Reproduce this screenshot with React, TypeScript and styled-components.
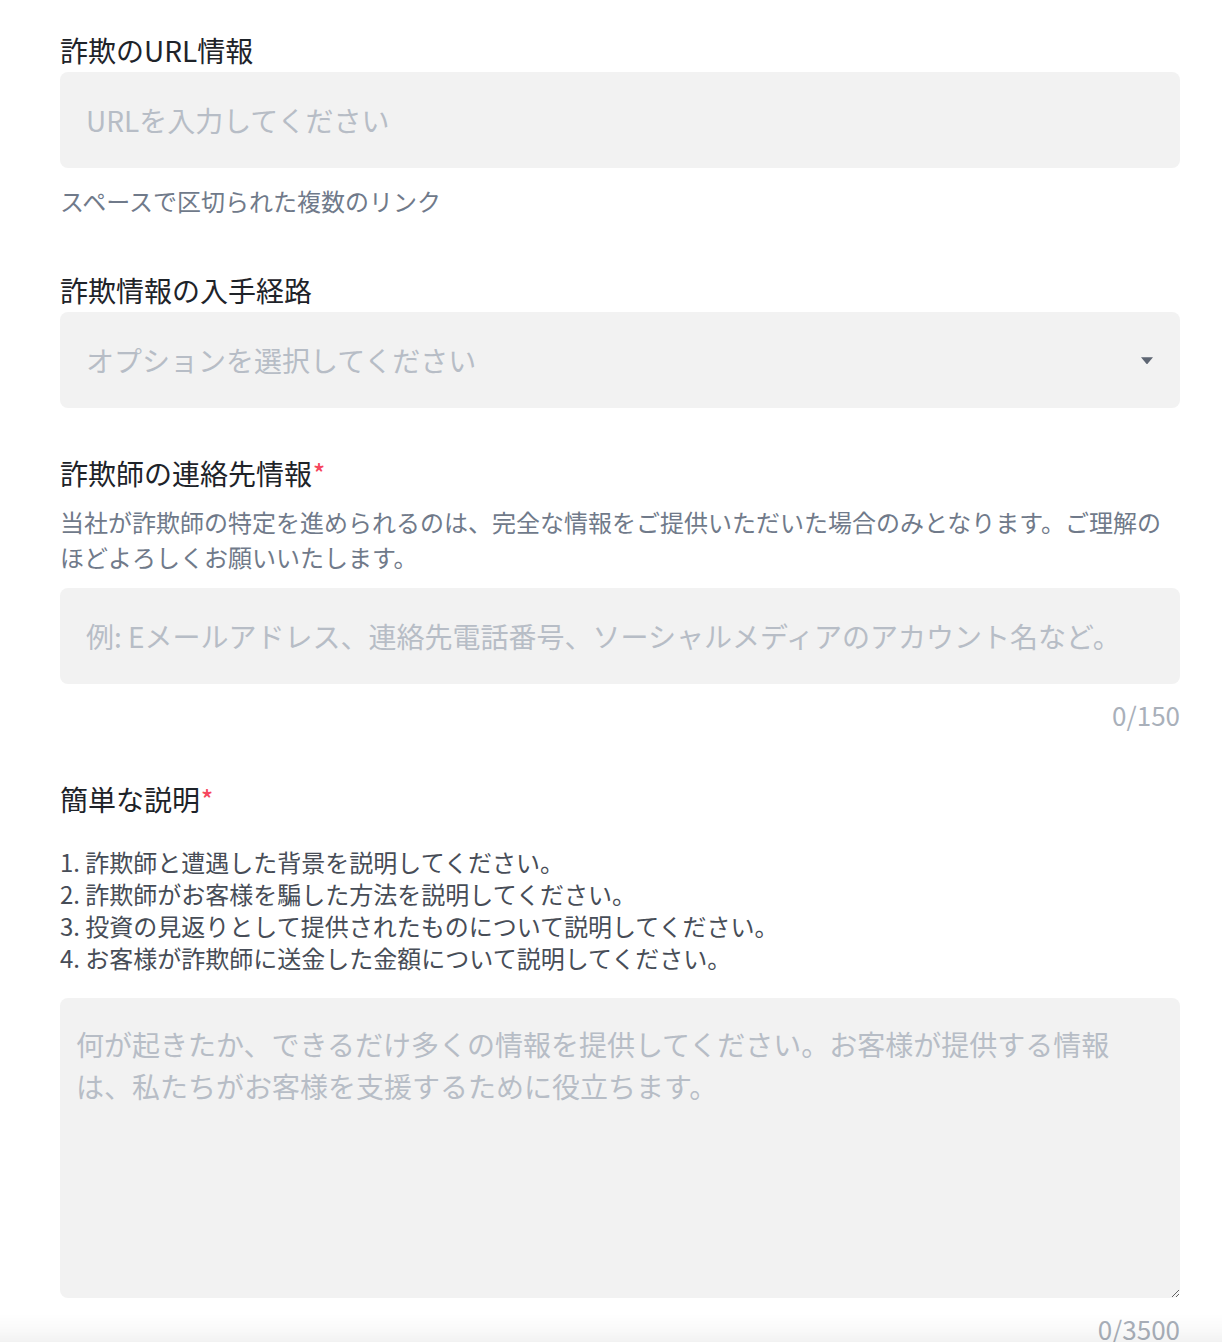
import React from "react";
import styled, { createGlobalStyle } from "styled-components";

const GlobalStyle = createGlobalStyle`
  html, body {
    margin: 0;
    padding: 0;
    background: #ffffff;
    overflow: hidden;
  }
  body {
    font-family: "Noto Sans CJK JP", "Noto Sans", sans-serif;
    color: #1e2329;
  }
  * { box-sizing: border-box; }
`;

const Form = styled.form`
  display: flex;
  flex-direction: column;
  padding: 30px 42px 0 60px;
  width: 1222px;
`;

const Field = styled.div<{ $gap?: number }>`
  display: flex;
  flex-direction: column;
  margin-bottom: ${(p) => p.$gap ?? 0}px;
`;

const Label = styled.label<{ $gap?: number }>`
  font-size: 28px;
  line-height: 40px;
  font-weight: 400;
  color: #1e2329;
  margin-bottom: ${(p) => p.$gap ?? 2}px;
`;

const Required = styled.span`
  color: #f6465d;
  font-size: 25px;
  font-weight: 500;
  line-height: 1;
  vertical-align: 2px;
  margin-left: 1px;
`;

const TextInput = styled.input`
  width: 100%;
  height: 96px;
  border: none;
  outline: none;
  border-radius: 8px;
  background: #f2f2f2;
  padding: 0 26px;
  font-family: inherit;
  font-size: 28px;
  color: #1e2329;
  &::placeholder {
    color: #b7bdc6;
  }
`;

const SelectBox = styled.div`
  display: flex;
  align-items: center;
  justify-content: space-between;
  height: 96px;
  border-radius: 8px;
  background: #f2f2f2;
  padding: 0 26px 0 26px;
  cursor: pointer;
`;

const SelectPlaceholder = styled.span`
  font-size: 28px;
  color: #b7bdc6;
`;

const Hint = styled.div<{ $top?: number }>`
  font-size: 24px;
  line-height: 36px;
  color: #707a8a;
  margin-top: ${(p) => p.$top ?? 0}px;
`;

const Para = styled.p`
  margin: 11px 0 14px;
  font-size: 24px;
  line-height: 35px;
  color: #707a8a;
`;

const Steps = styled.ol`
  list-style: none;
  margin: 27px 0 24px;
  padding: 0;
  font-size: 24px;
  line-height: 32px;
  color: #474d57;
`;

const Counter = styled.div`
  align-self: flex-end;
  font-size: 26px;
  line-height: 36px;
  color: #a9b0ba;
  margin-top: 13px;
`;

const TextArea = styled.textarea`
  width: 100%;
  height: 300px;
  border: none;
  outline: none;
  border-radius: 8px;
  background: #f2f2f2;
  padding: 25px 70px 0 16px;
  font-family: inherit;
  font-size: 28px;
  line-height: 42px;
  resize: vertical;
  color: #1e2329;
  &::placeholder {
    color: #b7bdc6;
  }
`;

const FooterShade = styled.div`
  position: fixed;
  left: 0;
  right: 0;
  bottom: 0;
  height: 28px;
  pointer-events: none;
  background: linear-gradient(
    to bottom,
    rgba(0, 0, 0, 0) 0%,
    rgba(0, 0, 0, 0.025) 60%,
    rgba(0, 0, 0, 0.05) 100%
  );
`;

const Caret = () => (
  <svg width="14" height="9" viewBox="0 0 14 9" aria-hidden="true">
    <path d="M1 1.2 L13 1.2 L7.6 7.8 Q7 8.4 6.4 7.8 Z" fill="#5e6673" />
  </svg>
);

export default function App() {
  return (
    <>
      <GlobalStyle />
      <Form onSubmit={(e) => e.preventDefault()}>
        <Field $gap={51}>
          <Label>詐欺のURL情報</Label>
          <TextInput placeholder="URLを入力してください" />
          <Hint $top={15}>スペースで区切られた複数のリンク</Hint>
        </Field>

        <Field $gap={45}>
          <Label>詐欺情報の入手経路</Label>
          <SelectBox>
            <SelectPlaceholder>オプションを選択してください</SelectPlaceholder>
            <Caret />
          </SelectBox>
        </Field>

        <Field $gap={46}>
          <Label $gap={0}>
            詐欺師の連絡先情報<Required>*</Required>
          </Label>
          <Para>
            当社が詐欺師の特定を進められるのは、完全な情報をご提供いただいた場合のみとなります。ご理解のほどよろしくお願いいたします。
          </Para>
          <TextInput placeholder="例: Eメールアドレス、連絡先電話番号、ソーシャルメディアのアカウント名など。" />
          <Counter>0/150</Counter>
        </Field>

        <Field>
          <Label $gap={0}>
            簡単な説明<Required>*</Required>
          </Label>
          <Steps>
            <li>1. 詐欺師と遭遇した背景を説明してください。</li>
            <li>2. 詐欺師がお客様を騙した方法を説明してください。</li>
            <li>3. 投資の見返りとして提供されたものについて説明してください。</li>
            <li>4. お客様が詐欺師に送金した金額について説明してください。</li>
          </Steps>
          <TextArea placeholder="何が起きたか、できるだけ多くの情報を提供してください。お客様が提供する情報は、私たちがお客様を支援するために役立ちます。" />
          <Counter>0/3500</Counter>
        </Field>
      </Form>
      <FooterShade />
    </>
  );
}
